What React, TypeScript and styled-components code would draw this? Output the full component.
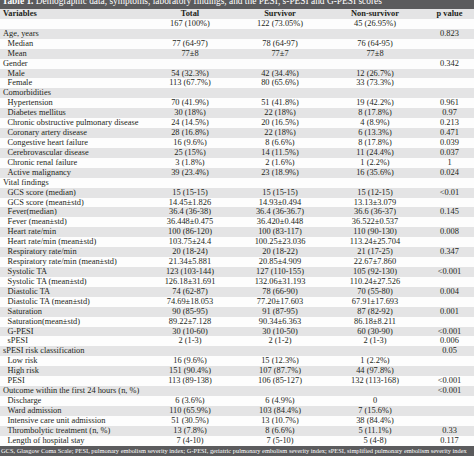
import React from "react";
import styled, { createGlobalStyle } from "styled-components";

const Global = createGlobalStyle`
  html, body { margin: 0; padding: 0; background: #ffffff; }
  body { width: 474px; height: 456px; overflow: hidden; }
`;

const Page = styled.div`
  width: 474px;
  height: 456px;
  display: flex;
  flex-direction: column;
  font-family: "Liberation Serif", "Times New Roman", serif;
  color: #231f20;
  overflow: hidden;
`;

const TitleBar = styled.div`
  height: 9px;
  flex: 0 0 9px;
  background: #5b5b5d;
  overflow: hidden;
  color: #ffffff;
  font-size: 9.4px;
  line-height: 9px;
  white-space: nowrap;
  padding-left: 2px;
`;

const TitleText = styled.div`
  margin-top: -3px;
`;

const Table = styled.div`
  display: flex;
  flex-direction: column;
`;

const Row = styled.div<{ $shade: boolean; $head?: boolean }>`
  display: grid;
  grid-template-columns: 145px 90px 90px 100px 49px;
  height: 9.93px;
  align-items: center;
  background: ${(p) => (p.$shade ? "#e4e4e5" : "#fdfdfd")};
  font-size: 8.4px;
  line-height: 9.93px;
  font-weight: ${(p) => (p.$head ? 700 : 400)};
  white-space: nowrap;
`;

const Label = styled.div<{ $indent: boolean }>`
  padding-left: ${(p) => (p.$indent ? "7.5px" : "3px")};
`;

const Cell = styled.div`
  text-align: center;
`;

const Footer = styled.div`
  flex: 1 1 auto;
  background: #5b5b5d;
  color: #ffffff;
  font-size: 6.4px;
  line-height: 10px;
  white-space: nowrap;
  padding-left: 1px;
  overflow: hidden;
`;

type R = [string, boolean, string, string, string, string];

const rows: R[] = [
  ["", false, "167 (100%)", "122 (73.05%)", "45 (26.95%)", ""],
  ["Age, years", false, "", "", "", "0.823"],
  ["Median", true, "77 (64-97)", "78 (64-97)", "76 (64-95)", ""],
  ["Mean", true, "77±8", "77±7", "77±8", ""],
  ["Gender", false, "", "", "", "0.342"],
  ["Male", true, "54 (32.3%)", "42 (34.4%)", "12 (26.7%)", ""],
  ["Female", true, "113 (67.7%)", "80 (65.6%)", "33 (73.3%)", ""],
  ["Comorbidities", false, "", "", "", ""],
  ["Hypertension", true, "70 (41.9%)", "51 (41.8%)", "19 (42.2%)", "0.961"],
  ["Diabetes mellitus", true, "30 (18%)", "22 (18%)", "8 (17.8%)", "0.97"],
  ["Chronic obstructive pulmonary disease", true, "24 (14.5%)", "20 (16.5%)", "4 (8.9%)", "0.213"],
  ["Coronary artery disease", true, "28 (16.8%)", "22 (18%)", "6 (13.3%)", "0.471"],
  ["Congestive heart failure", true, "16 (9.6%)", "8 (6.6%)", "8 (17.8%)", "0.039"],
  ["Cerebrovascular disease", true, "25 (15%)", "14 (11.5%)", "11 (24.4%)", "0.037"],
  ["Chronic renal failure", true, "3 (1.8%)", "2 (1.6%)", "1 (2.2%)", "1"],
  ["Active malignancy", true, "39 (23.4%)", "23 (18.9%)", "16 (35.6%)", "0.024"],
  ["Vital findings", false, "", "", "", ""],
  ["GCS score (median)", true, "15 (15-15)", "15 (15-15)", "15 (12-15)", "<0.01"],
  ["GCS score (mean±std)", true, "14.45±1.826", "14.93±0.494", "13.13±3.079", ""],
  ["Fever(median)", true, "36.4 (36-38)", "36.4 (36-36.7)", "36.6 (36-37)", "0.145"],
  ["Fever (mean±std)", true, "36.448±0.475", "36.420±0.448", "36.522±0.537", ""],
  ["Heart rate/min", true, "100 (86-120)", "100 (83-117)", "110 (90-130)", "0.008"],
  ["Heart rate/min (mean±std)", true, "103.75±24.4", "100.25±23.036", "113.24±25.704", ""],
  ["Respiratory rate/min", true, "20 (18-24)", "20 (18-22)", "21 (17-25)", "0.347"],
  ["Respiratory rate/min (mean±std)", true, "21.34±5.881", "20.85±4.909", "22.67±7.860", ""],
  ["Systolic TA", true, "123 (103-144)", "127 (110-155)", "105 (92-130)", "<0.001"],
  ["Systolic TA (mean±std)", true, "126.18±31.691", "132.06±31.193", "110.24±27.526", ""],
  ["Diastolic TA", true, "74 (62-87)", "78 (66-90)", "70 (55-80)", "0.004"],
  ["Diastolic TA (mean±std)", true, "74.69±18.053", "77.20±17.603", "67.91±17.693", ""],
  ["Saturation", true, "90 (85-95)", "91 (87-95)", "87 (82-92)", "0.001"],
  ["Saturation(mean±std)", true, "89.22±7.128", "90.34±6.363", "86.18±8.211", ""],
  ["G-PESI", true, "30 (10-60)", "30 (10-50)", "60 (30-90)", "<0.001"],
  ["sPESI", true, "2 (1-3)", "2 (1-2)", "2 (1-3)", "0.006"],
  ["sPESI risk classification", false, "", "", "", "0.05"],
  ["Low risk", true, "16 (9.6%)", "15 (12.3%)", "1 (2.2%)", ""],
  ["High risk", true, "151 (90.4%)", "107 (87.7%)", "44 (97.8%)", ""],
  ["PESI", true, "113 (89-138)", "106 (85-127)", "132 (113-168)", "<0.001"],
  ["Outcome within the first 24 hours (n, %)", false, "", "", "", "<0.001"],
  ["Discharge", true, "6 (3.6%)", "6 (4.9%)", "0", ""],
  ["Ward admission", true, "110 (65.9%)", "103 (84.4%)", "7 (15.6%)", ""],
  ["Intensive care unit admission", true, "51 (30.5%)", "13 (10.7%)", "38 (84.4%)", ""],
  ["Thrombolytic treatment (n, %)", true, "13 (7.8%)", "8 (6.6%)", "5 (11.1%)", "0.33"],
  ["Length of hospital stay", true, "7 (4-10)", "7 (5-10)", "5 (4-8)", "0.117"],
];

export default function App() {
  return (
    <Page>
      <Global />
      <TitleBar>
        <TitleText>
          <b>Table 1.</b> Demographic data, symptoms, laboratory findings, and the PESI, s-PESI and G-PESI scores
        </TitleText>
      </TitleBar>
      <Table>
        <Row $shade $head>
          <Label $indent={false}>Variables</Label>
          <Cell>Total</Cell>
          <Cell>Survivor</Cell>
          <Cell>Non-survivor</Cell>
          <Cell>p value</Cell>
        </Row>
        {rows.map((r, i) => (
          <Row key={i} $shade={i % 2 === 1}>
            <Label $indent={r[1]}>{r[0]}</Label>
            <Cell>{r[2]}</Cell>
            <Cell>{r[3]}</Cell>
            <Cell>{r[4]}</Cell>
            <Cell>{r[5]}</Cell>
          </Row>
        ))}
      </Table>
      <Footer>
        GCS, Glasgow Coma Scale; PESI, pulmonary embolism severity index; G-PESI, geriatric pulmonary embolism severity index; sPESI, simplified pulmonary embolism severity index
      </Footer>
    </Page>
  );
}
